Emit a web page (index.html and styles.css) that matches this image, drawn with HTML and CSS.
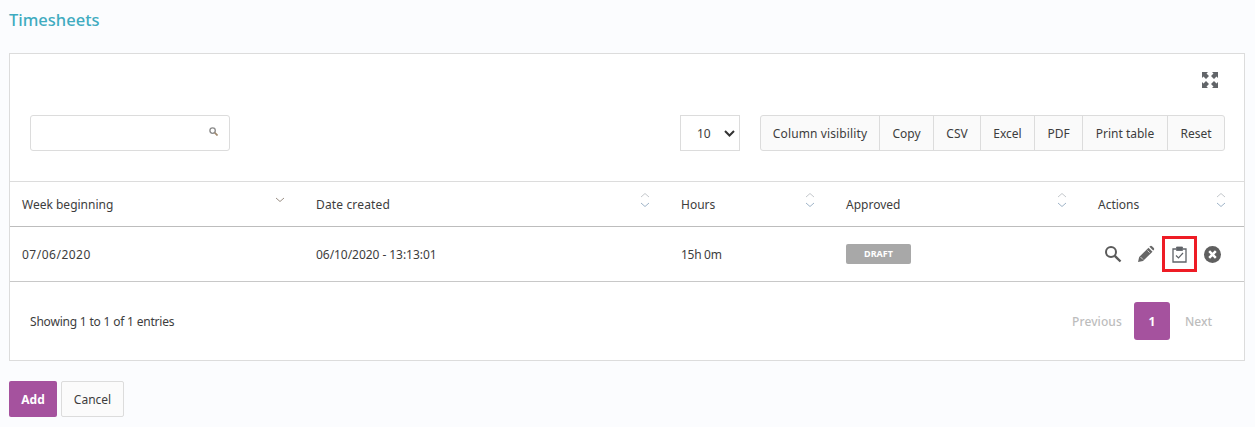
FILE: index.html
```html
<!DOCTYPE html>
<html lang="en">
<head>
<meta charset="utf-8">
<title>Timesheets</title>
<link rel="stylesheet" href="styles.css">
</head>
<body>
<h1 class="title">Timesheets</h1>
<section class="card">
  <div class="expand-row">
    <svg class="expand" width="16" height="16" viewBox="0 0 16 16" fill="#626569"><path d="M0 0h6L4.500 1.500 7 4 4 7 1.500 4.500 0 6zM16 0v6l-1.500-1.500L12 7 9 4l2.500-2.500L10 0zM0 16v-6l1.500 1.500L4 9l3 3-2.500 2.500L6 16zM16 16h-6l1.500-1.500L9 12l3-3 2.500 2.500L16 10z"/></svg>
  </div>
  <div class="toolbar">
    <div class="search">
      <svg width="9" height="9" viewBox="0 0 10 10" fill="none" stroke="#8b8b8b" stroke-width="1.500"><circle cx="4" cy="4" r="3"/><path d="M6.300 6.300L9.500 9.500" stroke="#a08a70" stroke-width="1.800"/></svg>
    </div>
    <div class="length">
      <span>10</span>
      <svg width="11" height="7" viewBox="0 0 11 7" fill="none" stroke="#333" stroke-width="2"><path d="M1 1l4.500 4.500L10 1"/></svg>
    </div>
    <div class="buttons">
      <span class="tb-btn w1">Column visibility</span>
      <span class="tb-btn w2">Copy</span>
      <span class="tb-btn w3">CSV</span>
      <span class="tb-btn w4">Excel</span>
      <span class="tb-btn w5">PDF</span>
      <span class="tb-btn w6">Print table</span>
      <span class="tb-btn w7">Reset</span>
    </div>
  </div>
  <table class="grid">
    <colgroup>
      <col class="c1"><col class="c2"><col class="c3"><col class="c4"><col class="c5">
    </colgroup>
    <thead>
      <tr>
        <th><div class="th-in"><span>Week beginning</span><svg class="sort" width="10" height="16" viewBox="0 0 10 16" fill="none" stroke="#9a8f85"><path d="M1 6l4 3.500L9 6"/></svg></div></th>
        <th><div class="th-in"><span class="wide">Date created</span><svg class="sort" width="10" height="16" viewBox="0 0 10 16" fill="none"><path d="M1 5l4-3.500L9 5" stroke="#c4c8cc"/><path d="M1 11l4 3.500L9 11" stroke="#9fb4c8"/></svg></div></th>
        <th><div class="th-in"><span>Hours</span><svg class="sort" width="10" height="16" viewBox="0 0 10 16" fill="none"><path d="M1 5l4-3.500L9 5" stroke="#c4c8cc"/><path d="M1 11l4 3.500L9 11" stroke="#9fb4c8"/></svg></div></th>
        <th><div class="th-in"><span>Approved</span><svg class="sort" width="10" height="16" viewBox="0 0 10 16" fill="none"><path d="M1 5l4-3.500L9 5" stroke="#c4c8cc"/><path d="M1 11l4 3.500L9 11" stroke="#9fb4c8"/></svg></div></th>
        <th><div class="th-in"><span>Actions</span><svg class="sort sort-last" width="10" height="16" viewBox="0 0 10 16" fill="none"><path d="M1 5l4-3.500L9 5" stroke="#c4c8cc"/><path d="M1 11l4 3.500L9 11" stroke="#9fb4c8"/></svg></div></th>
      </tr>
    </thead>
    <tbody>
      <tr>
        <td class="date">07/06/2020</td>
        <td class="narrow">06/10/2020 - 13:13:01</td>
        <td class="narrow2">15h 0m</td>
        <td><span class="badge">DRAFT</span></td>
        <td>
          <div class="actions">
            <svg width="18" height="18" viewBox="0 0 18 18" fill="none" stroke="#5a5a5a"><circle cx="7" cy="7" r="5" stroke-width="2"/><path d="M10.800 10.800L16.500 16.500" stroke-width="2.400"/></svg>
            <svg class="pencil" width="18" height="18" viewBox="0 0 18 18" fill="#666"><path d="M1 17l1.200-5L11.500 2.700l4 4L6 16z"/><path d="M13 1.200a1.500 1.500 0 0 1 2 0l1.800 1.800a1.500 1.500 0 0 1 0 2l-.6.600-3.800-3.800z"/><path d="M3.500 12l2.500 2.500M10.500 5.500l2.200 2.200" stroke="#fff" stroke-width=".7"/></svg>
            <span class="highlight">
              <svg width="15" height="17" viewBox="0 0 15 17" fill="none" stroke="#5f6368" stroke-width="1.300"><path d="M4 3H1v13h13V3h-3"/><path d="M4.500 1h6v3.500h-6z" fill="#5f6368" stroke-width=".8"/><path d="M4 9.500l2.500 2.500 4.500-5" stroke-width="1.200"/></svg>
            </span>
            <svg class="remove" width="17" height="17" viewBox="0 0 18 18"><circle cx="9" cy="9" r="9" fill="#5f5f5f"/><path d="M5.500 5.500l7 7M12.500 5.500l-7 7" stroke="#fff" stroke-width="2.600"/></svg>
          </div>
        </td>
      </tr>
    </tbody>
  </table>
  <div class="foot">
    <span class="entries">Showing 1 to 1 of 1 entries</span>
    <nav class="pager">
      <span class="pg pg-prev">Previous</span>
      <span class="pg-cur">1</span>
      <span class="pg pg-next">Next</span>
    </nav>
  </div>
</section>
<div class="form-actions">
  <span class="btn-add">Add</span>
  <span class="btn-cancel">Cancel</span>
</div>
</body>
</html>
```
FILE: styles.css
```css
* { box-sizing: border-box; }
html, body { margin: 0; height: 100%; }
body {
  background: #fbfcfe;
  font-family: "Noto Sans", "Open Sans", sans-serif;
  font-size: 12px;
  color: #3d3d3d;
  padding: 0 10px 0 9px;
  overflow: hidden;
}
.title {
  margin: 0;
  height: 53px;
  padding-top: 9px;
  font-size: 16.500px;
  line-height: 22px;
  font-weight: 500;
  color: #3fabc0;
}
.card {
  height: 308px;
  background: #fff;
  border: 1px solid #dcdcdc;
  display: flex;
  flex-direction: column;
}
.expand-row {
  height: 61px;
  padding: 18px 26px 0 0;
  display: flex;
  justify-content: flex-end;
  align-items: flex-start;
}
.toolbar {
  height: 66px;
  padding: 0 19px 0 20px;
  display: flex;
  align-items: flex-start;
}
.search {
  width: 200px;
  height: 36px;
  border: 1px solid #dcdcdc;
  border-radius: 3px;
  display: flex;
  align-items: center;
  justify-content: flex-end;
  padding: 0 11px 4px 0;
}
.length {
  margin-left: auto;
  width: 60px;
  height: 36px;
  border: 1px solid #dcdcdc;
  display: flex;
  align-items: center;
  justify-content: space-between;
  padding: 0 4px 0 16px;
}
.buttons {
  margin-left: 20px;
  height: 36px;
  display: flex;
  border: 1px solid #dcdcdc;
  border-radius: 3px;
  background: #fafafa;
}
.tb-btn {
  display: flex;
  align-items: center;
  justify-content: center;
  border-left: 1px solid #dcdcdc;
  white-space: nowrap;
}
.tb-btn:first-child { border-left: 0; }
.w1 { width: 118px; letter-spacing: .12px; }
.w2 { width: 54px; }
.w3 { width: 47px; }
.w4 { width: 54px; }
.w5 { width: 48px; }
.w6 { width: 85px; }
.w7 { width: 57px; }
.grid {
  width: 100%;
  border-collapse: collapse;
  table-layout: fixed;
}
.c1 { width: 294px; }
.c2 { width: 365px; }
.c3 { width: 165px; }
.c4 { width: 252px; }
.grid th {
  height: 45px;
  padding: 0 0 0 12px;
  border-top: 1px solid #dcdcdc;
  border-bottom: 1px solid #bdbdbd;
  text-align: left;
  font-weight: 400;
}
.th-in {
  display: flex;
  justify-content: space-between;
  align-items: center;
  padding: 0 19px 0 0;
}
.wide { letter-spacing: .15px; }
.sort { margin-top: -8px; }
.sort-last { margin-right: -1px; }
.grid td {
  height: 55px;
  padding: 0 0 0 12px;
  border-bottom: 1px solid #c8c8c8;
}
.grid td.date { letter-spacing: .5px; }
.grid td.narrow { letter-spacing: -.05px; }
.grid td.narrow2 { letter-spacing: -.3px; }
.badge {
  display: block;
  width: 65px;
  height: 20px;
  line-height: 20px;
  background: #a8a8a8;
  border-radius: 2px;
  color: #fff;
  font-size: 9px;
  font-weight: 700;
  text-align: center;
}
.actions {
  display: flex;
  align-items: center;
  padding-left: 6px;
  height: 36px;
}
.pencil { margin-left: 15px; }
.highlight {
  width: 35px;
  height: 36px;
  margin-left: 7px;
  border: 3px solid #ee1c25;
  display: flex;
  align-items: center;
  justify-content: center;
}
.remove { margin-left: 7px; }
.foot {
  flex: 1;
  display: flex;
  align-items: center;
  justify-content: space-between;
  padding: 0 20px;
}
.entries { letter-spacing: -.2px; }
.pager {
  display: flex;
  align-items: center;
  color: #bdbdbd;
  font-weight: 500;
}
.pg-prev { padding-right: 12px; letter-spacing: .1px; }
.pg-next { padding: 0 12px 0 15px; }
.pg-cur {
  width: 36px;
  height: 38px;
  background: #a5529e;
  border-radius: 3px;
  color: #fff;
  font-weight: 700;
  display: flex;
  align-items: center;
  justify-content: center;
}
.form-actions {
  margin-top: 20px;
  display: flex;
  gap: 4px;
}
.btn-add, .btn-cancel {
  height: 36px;
  display: flex;
  align-items: center;
  border-radius: 2px;
}
.btn-add {
  width: 48px;
  justify-content: center;
  background: #a5529e;
  color: #fff;
  font-weight: 700;
}
.btn-cancel {
  width: 63px;
  justify-content: center;
  background: #fbfbfb;
  border: 1px solid #dcdcdc;
}
```
